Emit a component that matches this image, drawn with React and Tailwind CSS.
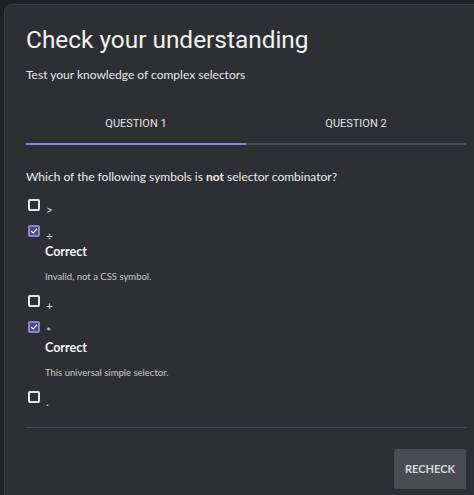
import { useState } from 'react';

const options = [
    { label: '>', checked: false },
    { label: '÷', checked: true, feedback: 'Invalid, not a CSS symbol.' },
    { label: '+', checked: false },
    { label: '*', checked: true, feedback: 'This universal simple selector.' },
    { label: '.', checked: false },
];

const Box = ({ checked }) => (
    <span
        className={
            checked
                ? 'w-[12px] h-[12px] flex items-center justify-center rounded-[2px] border-2 border-[#8784d0] bg-[#4d4c84]'
                : 'w-[12px] h-[12px] rounded-[2px] border-2 border-[#e6e6e6]'
        }
    >
        {checked && (
            <svg viewBox="0 0 10 10" className="w-[8px] h-[8px]">
                <path d="M1.5 5.2 L4 7.5 L8.6 2.4" fill="none" stroke="#ffffff" strokeWidth="1.5" />
            </svg>
        )}
    </span>
);

const App = () => {
    const [tab, setTab] = useState(0);

    return (
        <div className="w-screen h-[495px] overflow-hidden bg-[#1f2023] pl-[4px] pt-[4px] font-['Lato',sans-serif]">
            <div className="h-full bg-[#2e2f33] rounded-tl-[8px] border-l border-t border-[#3d3e43] pl-[21px] pr-[8px]">
                <h1 className="pt-[20px] text-[24.4px] leading-[30px] text-[#f1f1f1] font-['Roboto',sans-serif]">
                    Check your understanding
                </h1>
                <p className="mt-[11px] text-[12px] leading-[18px] text-[#e8e8e8]">Test your knowledge of complex selectors</p>

                <div className="mt-[21px] flex">
                    {['QUESTION 1', 'QUESTION 2'].map((t, i) => (
                        <button
                            key={t}
                            onClick={() => setTab(i)}
                            className={
                                'flex-1 h-[40px] flex items-center justify-center text-[11px] text-[#e3e3e3] border-b-2 font-[\'Roboto\',sans-serif] ' +
                                (tab === i ? 'border-[#8985d4]' : 'border-[#4b4c52]')
                            }
                        >
                            {t}
                        </button>
                    ))}
                </div>

                <p className="mt-[23px] text-[12px] leading-[18px] text-[#ececec]">
                    Which of the following symbols is <b>not</b> selector combinator?
                </p>

                <div className="mt-[13px] flex flex-col">
                    {options.map((o) => (
                        <div key={o.label} className="mb-[8px]">
                            <div className="flex items-start gap-[6px] pl-[2px]">
                                <Box checked={o.checked} />
                                <span className="mt-[4px] text-[12px] leading-[14px] text-[#dddddd]">{o.label}</span>
                            </div>
                            {o.feedback && (
                                <div className="pl-[19px] pb-[3px]">
                                    <div className="text-[12.5px] leading-[18px] font-bold text-[#f5f5f5]">Correct</div>
                                    <div className="mt-[9px] text-[9.5px] leading-[14px] text-[#c9c9c9]">{o.feedback}</div>
                                </div>
                            )}
                        </div>
                    ))}
                </div>

                <div className="mt-[10px] h-px bg-[#4a4b50]" />

                <div className="mt-[21px] flex justify-end">
                    <button className="w-[72px] h-[40px] bg-[#4a4c53] rounded-[2px] text-[11px] font-bold text-[#d6d7da]">
                        RECHECK
                    </button>
                </div>
            </div>
        </div>
    );
};

export default App;
